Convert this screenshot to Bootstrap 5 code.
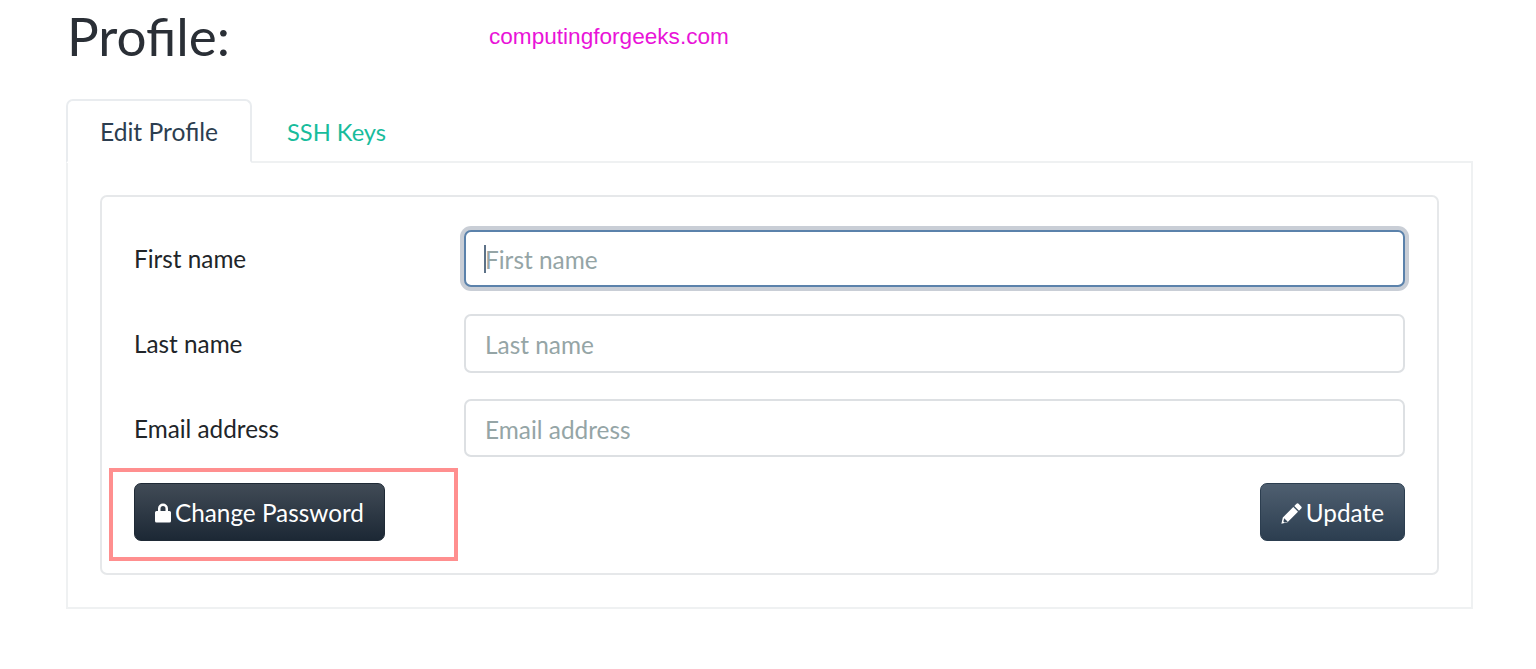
<!DOCTYPE html>
<html lang="en">
<head>
<meta charset="utf-8">
<title>Profile</title>
<link href="https://cdn.jsdelivr.net/npm/bootstrap@5.3.0/dist/css/bootstrap.min.css" rel="stylesheet">
<style>
html, body { height: 669px; overflow: hidden; background: #fff; }
body { font-family: Lato, "Liberation Sans", sans-serif; color: #212529; font-size: 24.3px; }
.page-wrap { padding: 0 63px 0 66px; }
.head-row { height: 99px; }
.page-title { font-family: Lato, sans-serif; font-size: 53px; line-height: 72px; font-weight: 400; width: 422px; margin-left: 1px; color: #2a2f36; }
.stamp { font-family: "Liberation Sans", sans-serif; font-size: 22.6px; line-height: 74px; color: #e913d8; }
.profile-tabs { border-bottom: 0; height: 64px; position: relative; z-index: 1; }
.profile-tabs .nav-link { font-size: 24.6px; line-height: 32px; padding: 15px 32px 16px 32px; height: 64px; border-radius: 7px 7px 0 0; color: #18bc9c; border: 2px solid transparent; margin: 0; }
.profile-tabs .nav-link.active { color: #2c3e50; background: #fff; border-color: #e9ecef #e9ecef #fff; }
.profile-tabs .nav-link.tab-keys { font-size: 23.7px; padding-left: 33px; }
.tab-box { border: 2px solid #eff1f2; margin-top: -2px; padding: 32px; height: 448px; }
.form-box { border: 2px solid #e6e8ea; border-radius: 7px; padding: 33px 32px 32px; height: 380px; position: relative; }
.field-row { display: flex; align-items: center; }
.field-label { width: 330px; margin: 0; flex: none; line-height: 34px; padding-top: 1px; }
.field-input.form-control { font-size: 24.4px; line-height: 34px; height: 100%; padding: 11px 19px 9px; border: 2px solid #dde0e3; border-radius: 7px; color: #2c3e50; }
.field-input.form-control::placeholder { color: #95a5a6; }
.field-input.is-focus { border-color: #5b82ab; box-shadow: 0 0 0 4px #c9ced6; background-image: linear-gradient(#5d7288, #5d7288); background-repeat: no-repeat; background-size: 2px 28px; background-position: 18px 13px; }
.row-one { height: 57px; margin-bottom: 27px; }
.row-two { height: 59px; margin-bottom: 26px; }
.row-three { height: 58px; margin-bottom: 26px; }
.act-btn { font-size: 24.3px; line-height: 34px; height: 58px; padding: 2px 20px 0; border-radius: 7px; color: #fff; display: inline-flex; align-items: center; gap: 4px; }
.act-btn:hover { color: #fff; }
.act-dark { background: linear-gradient(#414b56, #1c2835); border: 1px solid #1f2a36; }
.act-blue { background: linear-gradient(#4f5f70, #2c3e50); border: 1px solid #2c3e50; }
.red-frame { position: absolute; left: 7px; top: 271px; width: 349px; height: 93px; border: 4px solid #ff8f8f; pointer-events: none; }
</style>
</head>
<body>
<div class="page-wrap">
  <div class="head-row d-flex align-items-start">
    <h1 class="page-title">Profile:</h1>
    <span class="stamp">computingforgeeks.com</span>
  </div>
  <ul class="nav nav-tabs profile-tabs">
    <li class="nav-item"><a class="nav-link active" href="#">Edit Profile</a></li>
    <li class="nav-item"><a class="nav-link tab-keys" href="#">SSH Keys</a></li>
  </ul>
  <div class="tab-box">
    <form class="form-box">
      <div class="field-row row-one">
        <label class="field-label" for="fn">First name</label>
        <input id="fn" class="form-control field-input is-focus" placeholder="First name">
      </div>
      <div class="field-row row-two">
        <label class="field-label" for="ln">Last name</label>
        <input id="ln" class="form-control field-input" placeholder="Last name">
      </div>
      <div class="field-row row-three">
        <label class="field-label" for="em">Email address</label>
        <input id="em" class="form-control field-input" placeholder="Email address">
      </div>
      <div class="d-flex justify-content-between">
        <button type="button" class="btn act-btn act-dark">
          <svg width="16" height="20" viewBox="0 0 16 20" fill="#fff" aria-hidden="true"><path d="M1.5 8H3V5.5a5 5 0 0 1 10 0V8h1.5A1.5 1.5 0 0 1 16 9.500v8.500a1.500 1.500 0 0 1-1.500 1.500h-13A1.500 1.500 0 0 1 0 18V9.500A1.500 1.500 0 0 1 1.500 8zM5.500 8h5V5.500a2.500 2.500 0 0 0-5 0z"/></svg>
          Change Password
        </button>
        <button type="button" class="btn act-btn act-blue">
          <svg width="21" height="21" viewBox="0 0 21 21" fill="#fff" aria-hidden="true"><path d="M15.500.8a1.500 1.500 0 0 1 2.100 0l2.600 2.600a1.500 1.500 0 0 1 0 2.100L18 7.700 13.300 3zM12.300 4l4.700 4.700L6.500 19.200.4 20.800 1.800 14.500zM3.200 15.200l-.8 3.400 1 1 3.400-.8z"/></svg>
          Update
        </button>
      </div>
      <div class="red-frame"></div>
    </form>
  </div>
</div>
<script src="https://cdn.jsdelivr.net/npm/bootstrap@5.3.0/dist/js/bootstrap.bundle.min.js"></script>
</body>
</html>
